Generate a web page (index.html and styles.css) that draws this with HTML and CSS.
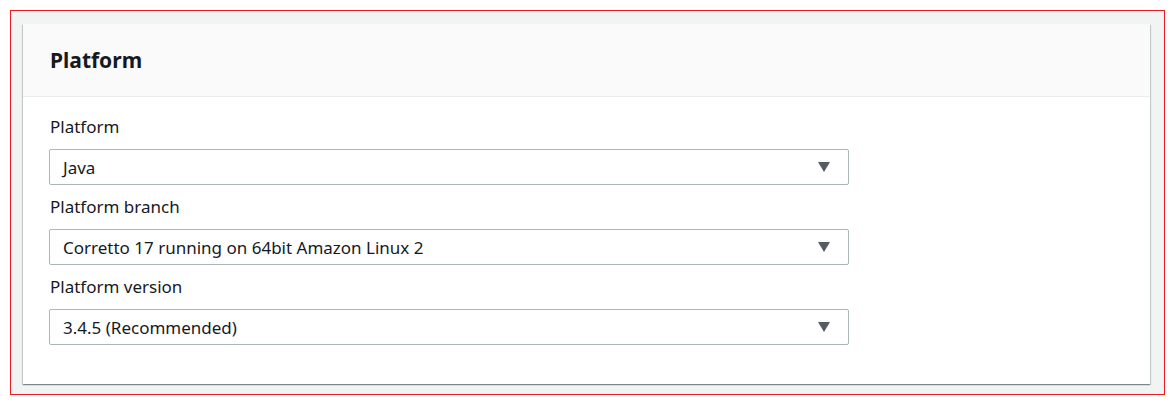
FILE: index.html
```html
<!DOCTYPE html>
<html lang="en">
<head>
    <meta charset="UTF-8">
    <meta name="viewport" content="width=device-width, initial-scale=1.0">
    <title>Platform</title>
    <link rel="stylesheet" href="styles.css">
</head>
<body>
    <div class="frame">
        <div class="card">
            <div class="card-header">
                <h2>Platform</h2>
            </div>
            <div class="card-body">
                <div class="field">
                    <label>Platform</label>
                    <div class="select">
                        <span>Java</span>
                        <svg class="caret" width="12" height="10" viewBox="0 0 12 10"><polygon points="0,0 12,0 6,10" /></svg>
                    </div>
                </div>
                <div class="field">
                    <label>Platform branch</label>
                    <div class="select">
                        <span>Corretto 17 running on 64bit Amazon Linux 2</span>
                        <svg class="caret" width="12" height="10" viewBox="0 0 12 10"><polygon points="0,0 12,0 6,10" /></svg>
                    </div>
                </div>
                <div class="field">
                    <label>Platform version</label>
                    <div class="select">
                        <span>3.4.5 (Recommended)</span>
                        <svg class="caret" width="12" height="10" viewBox="0 0 12 10"><polygon points="0,0 12,0 6,10" /></svg>
                    </div>
                </div>
            </div>
        </div>
    </div>
</body>
</html>
```

FILE: styles.css
```css
body {
    margin: 10px;
    background-color: #fff;
    font-family: "Noto Sans", Roboto, sans-serif;
    color: #16191f;
}
.frame {
    border: 1px solid #ec1c24;
    background-color: #f2f3f3;
    padding: 13px 14px 10px 12px;
}
.card {
    background-color: #fff;
    box-shadow: 0 1px 1px 0 rgba(0, 28, 36, 0.3), 1px 1px 1px 0 rgba(0, 28, 36, 0.15), -1px 1px 1px 0 rgba(0, 28, 36, 0.15);
}
.card-header {
    height: 72px;
    display: flex;
    align-items: center;
    padding: 0 27px;
    background-color: #fafafa;
    border-bottom: 1px solid #eaeded;
}
.card-header h2 {
    margin: 0;
    font-size: 21px;
    font-weight: 700;
}
.card-body {
    padding: 19px 26px 39px;
    display: flex;
    flex-direction: column;
    gap: 11px;
}
.field label {
    display: block;
    font-size: 17px;
    line-height: 22px;
    margin: 0 0 11px 1px;
}
.select {
    width: 800px;
    height: 36px;
    box-sizing: border-box;
    display: flex;
    align-items: center;
    justify-content: space-between;
    padding: 0 18px 0 13px;
    border: 1px solid #aab7b8;
    border-radius: 2px;
    font-size: 17px;
}
.caret {
    fill: #545b64;
}
```
